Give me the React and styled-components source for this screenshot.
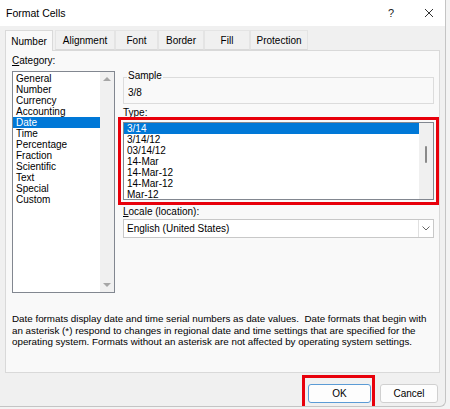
import React from 'react'
import styled, { createGlobalStyle } from 'styled-components'

const GlobalStyle = createGlobalStyle`
  html, body {
    margin: 0;
    padding: 0;
    background: #f3f3f3;
  }
  body {
    font-family: "Liberation Sans", Arial, sans-serif;
    font-size: 10px;
    color: #000;
  }
`

const Window = styled.div`
  width: 446px;
  height: 407px;
  box-sizing: border-box;
  background: #f0f0f0;
  border-right: 1px solid #c4c4c4;
  border-bottom: 1px solid #c4c4c4;
  border-bottom-right-radius: 6px;
  display: flex;
  flex-direction: column;
  overflow: hidden;
`

const TitleBar = styled.div`
  height: 26px;
  flex-shrink: 0;
  background: #fff;
  display: flex;
  align-items: center;
  padding-left: 6px;
  font-size: 10.5px;
`

const TitleText = styled.div`
  flex: 1;
`

const TitleButton = styled.div`
  width: ${({ w }) => w}px;
  display: flex;
  justify-content: center;
  align-items: center;
  color: #222;
  font-size: 11px;
`

const TabStrip = styled.div`
  display: flex;
  padding: 4px 0 0 5px;
  height: 20px;
  flex-shrink: 0;
  position: relative;
  z-index: 1;
`

const Tab = styled.div`
  box-sizing: border-box;
  width: ${({ w }) => w}px;
  height: ${({ active }) => (active ? 21 : 20)}px;
  display: flex;
  align-items: center;
  justify-content: center;
  background: ${({ active }) => (active ? '#f9f9f9' : '#f0f0f0')};
  border: 1px solid ${({ active }) => (active ? '#d9d9d9' : '#e4e4e4')};
  border-bottom: ${({ active }) => (active ? 'none' : '1px solid #d9d9d9')};
  margin-right: ${({ active }) => (active ? 2 : 0)}px;
  font-size: 10px;
`

const Panel = styled.div`
  box-sizing: border-box;
  flex-shrink: 0;
  margin: 0 5px;
  height: 323px;
  background: #f9f9f9;
  border: 1px solid #d9d9d9;
  padding: 4px 5px 0 6px;
  display: flex;
  flex-direction: column;
`

const Columns = styled.div`
  display: flex;
  gap: 8px;
  flex-shrink: 0;
`

const LeftCol = styled.div`
  width: 103px;
  display: flex;
  flex-direction: column;
  gap: 4px;
`

const RightCol = styled.div`
  flex: 1;
  display: flex;
  flex-direction: column;
  padding-top: 22px;
`

const Label = styled.div`
  line-height: 12px;
  height: 12px;
  margin-top: ${({ mt }) => mt || 0}px;
  margin-bottom: ${({ mb }) => mb || 0}px;
  & u {
    text-decoration: underline;
    text-underline-offset: 1px;
  }
`

const ListBox = styled.div`
  box-sizing: border-box;
  height: ${({ h }) => h}px;
  flex-shrink: 0;
  background: #fff;
  border: 1px solid #828790;
  display: flex;
`

const Items = styled.div`
  flex: 1;
  padding-top: ${({ pt }) => pt || 0}px;
  overflow: hidden;
`

const Item = styled.div`
  height: 11px;
  line-height: 11px;
  padding-left: 3px;
  background: ${({ selected }) => (selected ? '#0078d7' : 'transparent')};
  color: ${({ selected }) => (selected ? '#fff' : '#000')};
  white-space: nowrap;
`

const ScrollTrack = styled.div`
  width: 14px;
  background: #f0f0f0;
  display: flex;
  flex-direction: column;
  justify-content: space-between;
  align-items: center;
  padding: 5px 0;
  position: relative;
`

const Arrow = styled.div`
  width: 0;
  height: 0;
  border-left: 4px solid transparent;
  border-right: 4px solid transparent;
  ${({ down }) =>
    down ? 'border-top: 4px solid #a6a6a6;' : 'border-bottom: 4px solid #a6a6a6;'}
`

const ThinThumb = styled.div`
  position: absolute;
  left: 6px;
  top: 23px;
  width: 2px;
  height: 17px;
  border-radius: 1px;
  background: #8a8a8a;
`

const GroupBox = styled.div`
  box-sizing: border-box;
  height: 27px;
  border: 1px solid #dcdcdc;
  padding: 0 3px;
  display: flex;
  flex-direction: column;
  align-items: flex-start;
`

const GroupTitle = styled.div`
  margin-top: -8px;
  padding: 0 1px;
  line-height: 12px;
  background: #f9f9f9;
`

const SampleValue = styled.div`
  line-height: 12px;
  margin-top: 5px;
  padding-left: 1px;
`

const Highlight = styled.div`
  outline: 3px solid #e8000b;
  outline-offset: 2px;
`

const Select = styled.div`
  box-sizing: border-box;
  height: 19px;
  background: #fff;
  border: 1px solid #c8c8c8;
  display: flex;
  align-items: stretch;
`

const SelectText = styled.div`
  flex: 1;
  display: flex;
  align-items: center;
  padding-left: 3px;
`

const SelectButton = styled.div`
  width: 14px;
  border-left: 1px solid #e0e0e0;
  display: flex;
  align-items: center;
  justify-content: center;
`

const Description = styled.div`
  margin-top: 20px;
  line-height: 11.5px;
  font-size: 9.8px;
  padding-right: 1px;
`

const Footer = styled.div`
  flex: 1;
  display: flex;
  justify-content: flex-end;
  align-items: flex-start;
  padding: 2px 7px 0 0;
  gap: 5px;
`

const RedFrame = styled.div`
  border: 3px solid #e8000b;
  padding: 6px 1px 4px 3px;
  display: flex;
`

const Button = styled.button`
  box-sizing: border-box;
  width: ${({ w }) => w}px;
  height: 19px;
  margin-top: ${({ mt }) => mt || 0}px;
  background: #fdfdfd;
  border: 1px solid ${({ primary }) => (primary ? '#5b9bd5' : '#d0d0d0')};
  border-radius: 3px;
  font-family: inherit;
  font-size: 10px;
  color: #000;
  padding: 0;
`

const categories = [
  'General', 'Number', 'Currency', 'Accounting', 'Date', 'Time',
  'Percentage', 'Fraction', 'Scientific', 'Text', 'Special', 'Custom',
]

const types = ['3/14', '3/14/12', '03/14/12', '14-Mar', '14-Mar-12', '14-Mar-12', 'Mar-12']

const tabs = [
  { name: 'Number', w: 48 },
  { name: 'Alignment', w: 60 },
  { name: 'Font', w: 43 },
  { name: 'Border', w: 46 },
  { name: 'Fill', w: 46 },
  { name: 'Protection', w: 58 },
]

export default function App() {
  return (
    <>
      <GlobalStyle />
      <Window>
        <TitleBar>
          <TitleText>Format Cells</TitleText>
          <TitleButton w={44}>?</TitleButton>
          <TitleButton w={32}>
            <svg width="10" height="10" viewBox="0 0 10 10">
              <path d="M1 1 L9 9 M9 1 L1 9" stroke="#333" strokeWidth="1" />
            </svg>
          </TitleButton>
        </TitleBar>
        <TabStrip>
          {tabs.map((t, i) => (
            <Tab key={t.name} w={t.w} active={i === 0}>{t.name}</Tab>
          ))}
        </TabStrip>
        <Panel>
          <Columns>
            <LeftCol>
              <Label><u>C</u>ategory:</Label>
              <ListBox h={222}>
                <Items pt={1}>
                  {categories.map((c) => (
                    <Item key={c} selected={c === 'Date'}>{c}</Item>
                  ))}
                </Items>
                <ScrollTrack>
                  <Arrow />
                  <Arrow down />
                </ScrollTrack>
              </ListBox>
            </LeftCol>
            <RightCol>
              <GroupBox>
                <GroupTitle>Sample</GroupTitle>
                <SampleValue>3/8</SampleValue>
              </GroupBox>
              <Label mt={3} mb={3}><u>T</u>ype:</Label>
              <Highlight>
                <ListBox h={78}>
                  <Items>
                    {types.map((t, i) => (
                      <Item key={i} selected={i === 0}>{t}</Item>
                    ))}
                  </Items>
                  <ScrollTrack>
                    <ThinThumb />
                  </ScrollTrack>
                </ListBox>
              </Highlight>
              <Label mt={6} mb={1}><u>L</u>ocale (location):</Label>
              <Select>
                <SelectText>English (United States)</SelectText>
                <SelectButton>
                  <svg width="8" height="5" viewBox="0 0 8 5">
                    <path d="M0.5 0.5 L4 4 L7.5 0.5" fill="none" stroke="#666" strokeWidth="1" />
                  </svg>
                </SelectButton>
              </Select>
            </RightCol>
          </Columns>
          <Description>
            Date formats display date and time serial numbers as date values.&nbsp; Date formats that begin with
            an asterisk (*) respond to changes in regional date and time settings that are specified for the
            operating system. Formats without an asterisk are not affected by operating system settings.
          </Description>
        </Panel>
        <Footer>
          <RedFrame>
            <Button primary w={63}>OK</Button>
          </RedFrame>
          <Button w={58} mt={9}>Cancel</Button>
        </Footer>
      </Window>
    </>
  )
}
